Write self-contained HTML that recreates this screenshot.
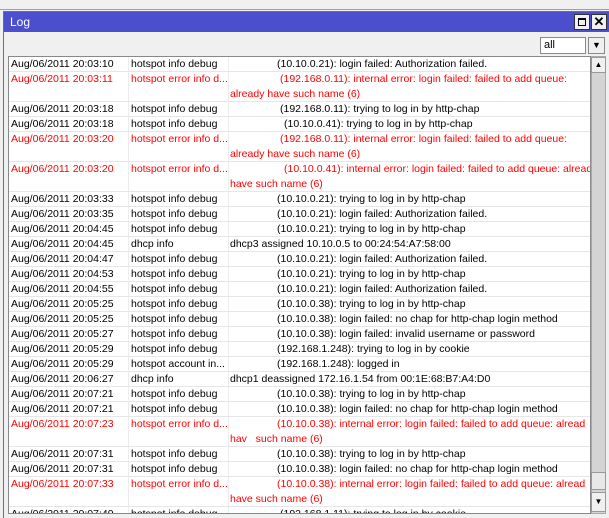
<!DOCTYPE html>
<html><head><style>
*{margin:0;padding:0;box-sizing:border-box}
body{width:609px;height:518px;overflow:hidden;background:#f0f0f0;font-family:"Liberation Sans",sans-serif;font-size:11px;position:relative}
.top{position:absolute;left:0;top:0;width:609px;height:10px;background:#f0f0f0;border-bottom:1px solid #a0a0a0}
.frame{position:absolute;left:3px;top:11px;width:606px;height:507px;background:#f0f0f0;border-left:1px solid #707070;border-top:1px solid #707070}
.title{position:absolute;left:4px;top:12px;width:605px;height:20px;background:#4b4fcd;color:#fff;font-size:12px;padding:3px 0 0 6px}
.tb{position:absolute;top:14px;width:16px;height:16px;background:#f0f0f0;border:1px solid #333}
.sel{position:absolute;left:540px;top:37px;width:46px;height:17px;background:#fff;border:1px solid #888;padding:1px 3px}
.dd{position:absolute;left:588px;top:37px;width:17px;height:17px;background:#f0f0f0;border:1px solid #888;text-align:center;font-size:9px;line-height:15px}
.tbl{position:absolute;left:8px;top:56px;width:583px;height:458px;background:#fff;border:1px solid #888;overflow:hidden;font-size:10.5px}
.r{position:absolute;left:0;width:583px;border-bottom:1px solid #e6e6e6;color:#000;line-height:15px}
.r.e{color:#f00}
.r span{position:absolute;top:0;white-space:nowrap}
.c1{left:2px}.c2{left:122px}
.vl{position:absolute;top:0;width:1px;height:458px;background:#ececec}
.sb{position:absolute;left:591px;top:56px;width:15px;height:458px;background:#d4d4d4;border:1px solid #aaa}
.sbb{position:absolute;left:591px;width:15px;height:16px;background:#f0f0f0;border:1px solid #999;text-align:center;font-size:8px;line-height:14px}
</style></head><body>
<div class="top"></div>
<div class="frame"></div>
<div class="title">Log</div>
<div class="tb" style="left:574px"><div style="position:absolute;left:3px;top:3px;width:8px;height:8px;border:1px solid #000;border-top-width:2px"></div></div>
<div class="tb" style="left:591px;font-size:13px;line-height:13px;text-align:center;font-weight:bold">✕</div>
<div class="sel">all</div>
<div class="dd">▼</div>
<div class="tbl">
<div class="vl" style="left:119px"></div><div class="vl" style="left:219px"></div>
<div id="rows"></div>
</div>
<div class="sb"></div>
<div class="sbb" style="top:57px">▲</div>
<div class="sbb" style="top:492px;height:20px;line-height:18px">▼</div>
<div class="sbb" style="top:472px;height:18px;background:#e8e8e8"></div>
<script>
var d=[
[15,0,"20:03:10","hotspot info debug",268,"(10.10.0.21): login failed: Authorization failed."],
[30,1,"20:03:11","hotspot error info d...",271,"(192.168.0.11): internal error: login failed: failed to add queue:","already have such name (6)"],
[15,0,"20:03:18","hotspot info debug",271,"(192.168.0.11): trying to log in by http-chap"],
[15,0,"20:03:18","hotspot info debug",275,"(10.10.0.41): trying to log in by http-chap"],
[30,1,"20:03:20","hotspot error info d...",271,"(192.168.0.11): internal error: login failed: failed to add queue:","already have such name (6)"],
[30,1,"20:03:20","hotspot error info d...",275,"(10.10.0.41): internal error: login failed: failed to add queue: alread","have such name (6)"],
[15,0,"20:03:33","hotspot info debug",268,"(10.10.0.21): trying to log in by http-chap"],
[15,0,"20:03:35","hotspot info debug",268,"(10.10.0.21): login failed: Authorization failed."],
[15,0,"20:04:45","hotspot info debug",268,"(10.10.0.21): trying to log in by http-chap"],
[15,0,"20:04:45","dhcp info",221,"dhcp3 assigned 10.10.0.5 to 00:24:54:A7:58:00"],
[15,0,"20:04:47","hotspot info debug",268,"(10.10.0.21): login failed: Authorization failed."],
[15,0,"20:04:53","hotspot info debug",268,"(10.10.0.21): trying to log in by http-chap"],
[15,0,"20:04:55","hotspot info debug",268,"(10.10.0.21): login failed: Authorization failed."],
[15,0,"20:05:25","hotspot info debug",268,"(10.10.0.38): trying to log in by http-chap"],
[15,0,"20:05:25","hotspot info debug",268,"(10.10.0.38): login failed: no chap for http-chap login method"],
[15,0,"20:05:27","hotspot info debug",268,"(10.10.0.38): login failed: invalid username or password"],
[15,0,"20:05:29","hotspot info debug",268,"(192.168.1.248): trying to log in by cookie"],
[15,0,"20:05:29","hotspot account in...",268,"(192.168.1.248): logged in"],
[15,0,"20:06:27","dhcp info",221,"dhcp1 deassigned 172.16.1.54 from 00:1E:68:B7:A4:D0"],
[15,0,"20:07:21","hotspot info debug",268,"(10.10.0.38): trying to log in by http-chap"],
[15,0,"20:07:21","hotspot info debug",268,"(10.10.0.38): login failed: no chap for http-chap login method"],
[30,1,"20:07:23","hotspot error info d...",268,"(10.10.0.38): internal error: login failed: failed to add queue: alread","hav&nbsp;&nbsp;&nbsp;such name (6)"],
[15,0,"20:07:31","hotspot info debug",268,"(10.10.0.38): trying to log in by http-chap"],
[15,0,"20:07:31","hotspot info debug",268,"(10.10.0.38): login failed: no chap for http-chap login method"],
[30,1,"20:07:33","hotspot error info d...",268,"(10.10.0.38): internal error: login failed: failed to add queue: alread","have such name (6)"],
[15,0,"20:07:49","hotspot info debug",271,"(192.168.1.11): trying to log in by cookie"]];
var h="",y=0;
d.forEach(function(r){
h+='<div class="r'+(r[1]?' e':'')+'" style="top:'+y+'px;height:'+r[0]+'px"><span class="c1">Aug/06/2011 '+r[2]+'</span><span class="c2">'+r[3]+'</span><span style="left:'+r[4]+'px">'+r[5]+'</span>'+(r[6]?'<span style="left:221px;top:15px">'+r[6]+'</span>':'')+'</div>';
y+=r[0];});
document.getElementById("rows").innerHTML=h;
</script>
</body></html>
